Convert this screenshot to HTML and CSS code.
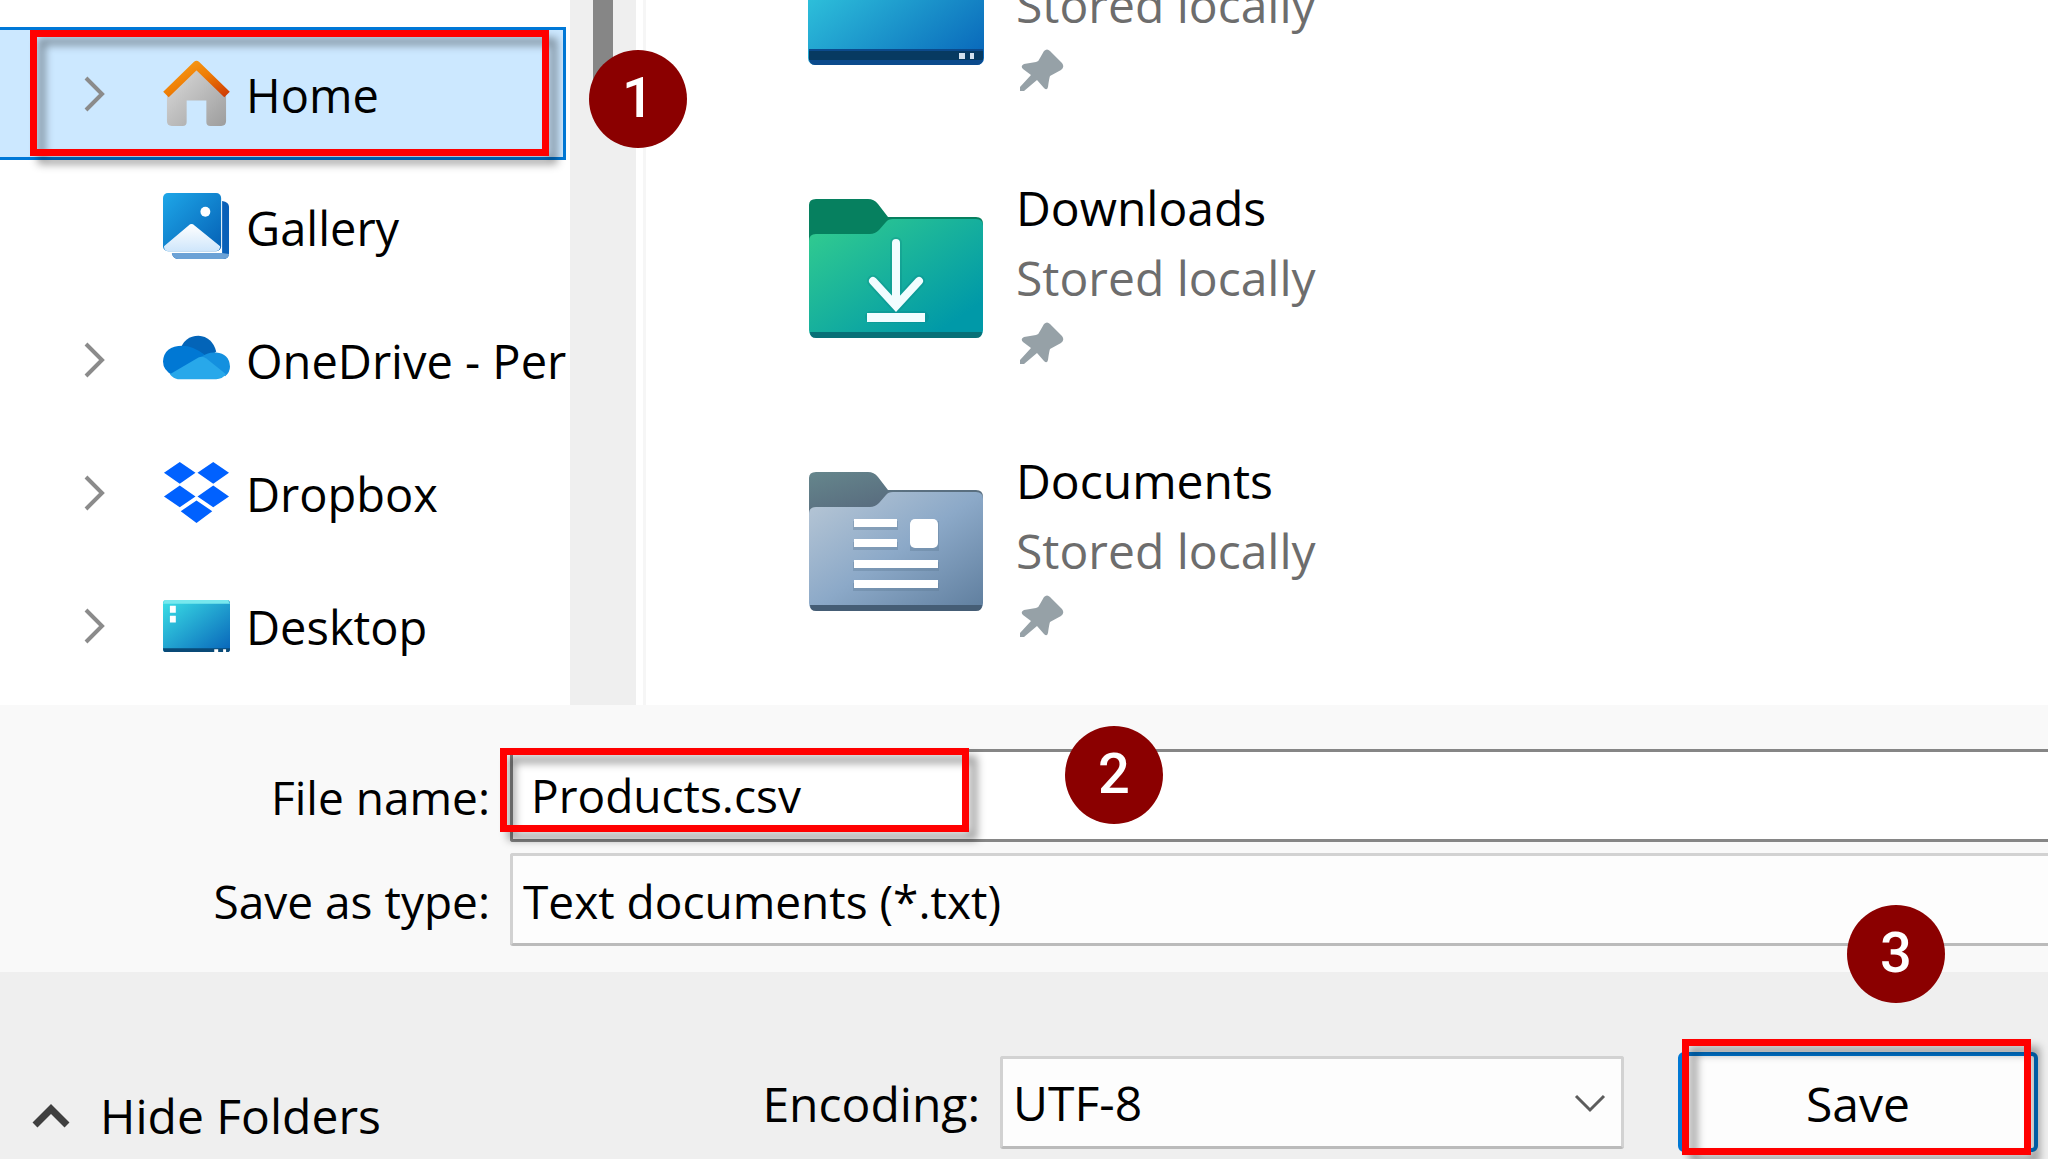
FILE: index.html
```
<!DOCTYPE html>
<html lang="en">
<head>
<meta charset="utf-8">
<title>Save As</title>
<link rel="stylesheet" href="styles.css">
</head>
<body>
<svg class="defs" aria-hidden="true">
  <defs>
    <linearGradient id="roof" x1="0" y1="0" x2="1" y2="1"><stop offset="0" stop-color="#f9a01b"/><stop offset=".5" stop-color="#ee7d05"/><stop offset="1" stop-color="#cf3d05"/></linearGradient>
    <linearGradient id="wall" x1="0" y1="0" x2="1" y2="1"><stop offset="0" stop-color="#dedede"/><stop offset="1" stop-color="#9d9d9d"/></linearGradient>
    <linearGradient id="photo" x1="0" y1="0" x2="1" y2="1"><stop offset="0" stop-color="#1ea7e8"/><stop offset="1" stop-color="#0560b5"/></linearGradient>
    <linearGradient id="hill" x1="0" y1="0" x2="0" y2="1"><stop offset="0" stop-color="#ffffff"/><stop offset="1" stop-color="#cfe6fb"/></linearGradient>
    <linearGradient id="screen" x1="0" y1="0" x2="1" y2="1"><stop offset="0" stop-color="#3be0e6"/><stop offset="1" stop-color="#0763b9"/></linearGradient>
    <linearGradient id="green" x1="0" y1="0" x2="1" y2="1"><stop offset="0" stop-color="#34ce8e"/><stop offset=".85" stop-color="#0099a8"/></linearGradient>
    <linearGradient id="slate" x1="0" y1="0" x2="1" y2="1"><stop offset="0" stop-color="#b9c8d6"/><stop offset=".5" stop-color="#8ca9c8"/><stop offset="1" stop-color="#5f7e9e"/></linearGradient>
    <linearGradient id="tab" x1="0" y1="0" x2="1" y2="1"><stop offset="0" stop-color="#65868c"/><stop offset=".5" stop-color="#5a6f80"/></linearGradient>
    <symbol id="chevron" viewBox="0 0 22 36"><path d="M2 2 18 18 2 34" fill="none" stroke="#8b8b8b" stroke-width="4"/></symbol>
    <symbol id="pin" viewBox="0 0 45 44"><path d="M25 2q3-3 6 0l12 12q3 4-1 7l-11 6q-1 3-2 11-1 4-4 1l-7-8L5 42H1v-4l11-12-8-6q-3-3 1-5l12-2q3-1 4-4Z" fill="#96a1a7"/></symbol>
  </defs>
</svg>

<main class="browser">
  <nav class="tree" aria-label="Folders">
    <ul class="tree-list">
      <li class="node node-selected">
        <svg class="chevron"><use href="#chevron"/></svg>
        <svg class="node-icon" viewBox="0 0 68 68"><path d="M4 32 34 5 64 32V62q0 5-5 5H48q-4 0-4-4V41H24V63q0 4-4 4H9q-5 0-5-5Z" fill="url(#wall)"/><path d="M3 35 34 5 65 35" fill="none" stroke="url(#roof)" stroke-width="8" stroke-linejoin="round"/></svg>
        <a class="node-name" href="#home">Home</a>
        <span class="mark mark-home"></span>
        <span class="step step-one">1</span>
      </li>
      <li class="node">
        <span class="chevron"></span>
        <svg class="node-icon" viewBox="0 0 68 68"><path d="M60 8q7 1 7 6V61q0 6-6 6H16q-6 0-7-6H60Z" fill="#0a60b8"/><path d="M9 61H60L67 62q0 5-6 5H16q-6 0-7-6Z" fill="#6ca2d6"/><rect width="59" height="59" rx="5" fill="url(#photo)"/><path d="M1 54 26 33q3-3 6 0L58 54q0 5-5 5H5q-4 0-4-5Z" fill="url(#hill)"/><circle cx="43" cy="19" r="5" fill="#fff"/></svg>
        <a class="node-name" href="#gallery">Gallery</a>
      </li>
      <li class="node">
        <svg class="chevron"><use href="#chevron"/></svg>
        <svg class="node-icon" viewBox="0 0 68 68"><path d="M17 25Q22 10 36 10 50 11 54 26L40 38Z" fill="#0364b8"/><path d="M10 50Q0 45 0 36 1 20 20 20 30 20 42 29L32 48Z" fill="#0078d4"/><path d="M38 32Q46 26 54 27 67 28 68 41 68 47 63 51Z" fill="#1490df"/><path d="M7 49 36 32q4-2 8 1L64 49q-4 5-10 5H15q-5-1-8-5Z" fill="#28a8ea"/></svg>
        <a class="node-name" href="#onedrive">OneDrive - Per</a>
      </li>
      <li class="node">
        <svg class="chevron"><use href="#chevron"/></svg>
        <svg class="node-icon" viewBox="0 0 68 68"><path d="m17 3 16 11-16 11L1 14Zm34 0 16 11-16 11-16-11ZM17 27l16 11-16 11L1 38Zm34 0 16 11-16 11-16-11ZM34 42l16 11-16 12-16-12Z" fill="#0061ff"/></svg>
        <a class="node-name" href="#dropbox">Dropbox</a>
      </li>
      <li class="node">
        <svg class="chevron"><use href="#chevron"/></svg>
        <svg class="node-icon" viewBox="0 0 68 68"><rect y="8" width="68" height="53" rx="3" fill="url(#screen)"/><path d="M2 8H66L68 12H0Z" fill="#77e8ee"/><path d="M0 57H68q0 4-3 4H3q-3 0-3-4Z" fill="#094a77"/><path d="M7 14h6v7H7Zm0 10h6v7H7ZM52 58h4v3h-4Zm9 0h3v3h-3Z" fill="#fff"/></svg>
        <a class="node-name" href="#desktop">Desktop</a>
      </li>
    </ul>
  </nav>
  <div class="scrollbar"><div class="thumb"></div></div>
  <section class="files" aria-label="Quick access">
    <article class="file">
      <svg class="file-icon" viewBox="0 0 177 141"><rect width="176" height="140" rx="7" fill="url(#screen)"/><path d="M1 124H175v9q0 7-6 7H7q-6 0-6-7Z" fill="#0b4a8c"/><path d="M1 126H175v9H1Z" fill="#073a61"/><path d="M151 128h6v6h-6Zm11 0h4v6h-4Z" fill="#d4e2ee"/></svg>
      <div class="file-text"><h2 class="file-name">Desktop</h2><p class="file-place">Stored locally</p><svg class="pin"><use href="#pin"/></svg></div>
    </article>
    <article class="file">
      <svg class="file-icon" viewBox="0 0 177 141"><path d="M1 40V7Q1 1 8 1H60q6 0 10 5L80 19H168q7 0 7 7V50H1Z" fill="#06805f"/><path d="M1 132V43q0-7 7-7H62q5 0 9-4l7-8q2-3 7-3h83q7 0 7 7V132q0 7-7 7H8q-7 0-7-7Z" fill="url(#green)"/><path d="M2 134H174q0 6-6 6H8q-6 0-6-6Z" fill="#087077"/><path d="M88 45v60M65 83l23 25 23-25M63 119h52" fill="none" stroke="#067b80" stroke-opacity=".25" stroke-width="12" stroke-linecap="round"/><path d="M88 45v60M65 83l23 25 23-25" fill="none" stroke="#f1fdff" stroke-width="8" stroke-linecap="round"/><path d="M59 115H117v9H59Z" fill="#f1fdff"/></svg>
      <div class="file-text"><h2 class="file-name">Downloads</h2><p class="file-place">Stored locally</p><svg class="pin"><use href="#pin"/></svg></div>
    </article>
    <article class="file">
      <svg class="file-icon" viewBox="0 0 177 141"><path d="M1 40V7Q1 1 8 1H60q6 0 10 5L80 19H168q7 0 7 7V50H1Z" fill="url(#tab)"/><path d="M1 132V43q0-7 7-7H62q5 0 9-4l7-8q2-3 7-3h83q7 0 7 7V132q0 7-7 7H8q-7 0-7-7Z" fill="url(#slate)"/><path d="M2 134H174q0 6-6 6H8q-6 0-6-6Z" fill="#455d75"/><path d="M45 50H90v9H45Zm0 21H90v8H45Zm0 20H131v9H45Zm0 21H131v8H45Zm57-62H131v30H102Z" fill="#5c7793" opacity=".35"/><path d="M46 48H89v8H46Zm0 20H89v8H46Zm0 21H130v8H46Zm0 20H130v8H46Z" fill="#fff"/><rect x="102" y="48" width="28" height="29" rx="5" fill="#fff"/></svg>
      <div class="file-text"><h2 class="file-name">Documents</h2><p class="file-place">Stored locally</p><svg class="pin"><use href="#pin"/></svg></div>
    </article>
  </section>
</main>

<form class="dialog" onsubmit="return false">
  <div class="fields">
    <label class="field-label" for="name">File name:</label>
    <div class="control">
      <input class="box name-box" id="name" type="text" value="Products.csv">
      <span class="mark mark-name"></span>
      <span class="step step-two">2</span>
    </div>
    <label class="field-label" for="type">Save as type:</label>
    <div class="control">
      <select class="box type-box" id="type"><option>Text documents (*.txt)</option></select>
    </div>
  </div>
  <footer class="actions">
    <button class="hide" type="button"><svg class="hide-icon" viewBox="0 0 38 26"><path d="M3 22 19 6 35 22" fill="none" stroke="#404040" stroke-width="7"/></svg>Hide Folders</button>
    <label class="encoding-label" for="encoding">Encoding:</label>
    <div class="control encoding">
      <select class="box" id="encoding"><option>UTF-8</option></select>
      <svg class="drop" viewBox="0 0 32 20"><path d="M2 2 16 16 30 2" fill="none" stroke="#5c5c5c" stroke-width="3"/></svg>
    </div>
    <div class="control save-control">
      <button class="save" type="submit">Save</button>
      <span class="mark mark-save"></span>
      <span class="step step-three">3</span>
    </div>
  </footer>
</form>
</body>
</html>
```
FILE: styles.css
```
* { box-sizing: border-box; }

body {
  margin: 0;
  height: 100vh;
  display: flex;
  flex-direction: column;
  overflow: hidden;
  background: #fff;
  color: #000;
  font: 48px/70px "Open Sans", "Noto Sans", sans-serif;
}

.defs { position: absolute; width: 0; height: 0; }

button, input, select { font: inherit; color: inherit; }

/* Folder tree and file list */
.browser { flex: 1; min-height: 0; display: flex; }

.tree { flex: none; width: 570px; padding-top: 27px; }
.tree-list { margin: 0; padding: 0; list-style: none; }

.node {
  position: relative;
  display: flex;
  align-items: center;
  width: 566px;
  height: 133px;
  padding-left: 84px;
}
.node-selected {
  background: #cce8ff;
  box-shadow: inset 0 3px #0078d7, inset 0 -3px #0078d7, inset -3px 0 #0078d7;
}
.chevron { flex: none; width: 22px; height: 36px; margin-right: 57px; }
.node-icon { flex: none; width: 67px; height: 67px; margin-right: 16px; }
.node-name {
  padding-top: 2px;
  color: inherit;
  font-size: 47px;
  text-decoration: none;
  white-space: nowrap;
}

.scrollbar {
  flex: none;
  width: 66px;
  padding: 0 23px;
  background: #efefef;
}
.thumb { height: 90px; background: #868686; }

.files {
  flex: 1;
  display: flex;
  flex-direction: column;
  justify-content: flex-end;
  overflow: hidden;
  margin-left: 7px;
  padding: 0 0 23px 162px;
  border-left: 3px solid #f6f6f6;
}
.file { flex: none; display: flex; gap: 31px; height: 273px; padding-top: 37px; }
.file-icon { width: 177px; height: 141px; margin-top: 25px; }
.file-name, .file-place { margin: 0; font-size: inherit; font-weight: 400; }
.file-place { color: #6d6d6d; }
.pin { display: block; width: 45px; height: 44px; margin: 9px 0 0 3px; }

/* File name and type */
.fields {
  display: grid;
  grid-template-columns: 490px 1fr;
  column-gap: 20px;
  row-gap: 11px;
  align-items: center;
  padding: 44px 0 26px;
  background: #f9f9f9;
  font-size: 46px;
}
.field-label { padding-top: 2px; text-align: right; }
.control { position: relative; display: flex; }

.box {
  width: 100%;
  height: 93px;
  padding: 2px 10px 0;
  border: 3px solid #d2d2d2;
  border-bottom-color: #bbb;
  border-radius: 3px;
  background: #fdfdfd;
  appearance: none;
  outline: 0;
}
.name-box, .type-box { border-right: 0; border-radius: 3px 0 0 3px; }
.name-box { padding: 0 0 2px 18px; border-color: #868686; background: #fff; }

/* Bottom bar */
.actions {
  display: flex;
  align-items: center;
  padding: 80px 10px 7px 32px;
  background: #efefef;
}
.hide {
  display: flex;
  align-items: center;
  gap: 30px;
  margin: 28px auto 0 0;
  padding: 0;
  border: 0;
  background: none;
}
.hide-icon { width: 38px; height: 26px; }
.encoding-label { margin-right: 20px; padding-top: 4px; }
.encoding { width: 624px; margin-right: 54px; }
.drop {
  position: absolute;
  right: 18px;
  top: 38px;
  width: 32px;
  height: 20px;
  pointer-events: none;
}
.save {
  width: 360px;
  height: 100px;
  padding: 4px 0 0;
  border: 4px solid #0078d4;
  border-radius: 6px;
  background: #fdfdfd;
}

/* Tutorial marks laid over the dialog */
.mark {
  position: absolute;
  border: 7px solid #f00;
  filter: drop-shadow(8px 8px 4px rgba(0, 0, 0, .4));
  pointer-events: none;
}
.mark-home { left: 30px; right: 17px; top: 3px; bottom: 4px; }
.mark-name { left: -10px; width: 469px; top: -1px; height: 84px; }
.mark-save { left: 4px; right: 7px; top: -13px; bottom: -3px; }

.step {
  position: absolute;
  width: 98px;
  height: 98px;
  border-radius: 50%;
  background: #8b0000;
  color: #fff;
  font: 500 56px/96px Roboto, sans-serif;
  text-align: center;
}
.step-one { left: 589px; top: 23px; z-index: 1; }
.step-two { left: 555px; top: -23px; }
.step-three { right: 93px; top: -147px; }
```
